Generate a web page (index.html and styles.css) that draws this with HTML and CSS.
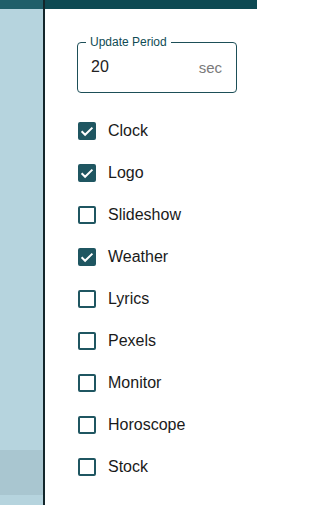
FILE: index.html
```html
<!DOCTYPE html>
<html>
<head>
<meta charset="utf-8">
<link rel="stylesheet" href="styles.css">
</head>
<body>
<div class="app">
  <aside class="sidebar">
    <div class="side-top"></div>
    <div class="side-fill"></div>
    <div class="side-sel"></div>
    <div class="side-end"></div>
  </aside>
  <main class="main">
    <div class="topbar"></div>
    <div class="content">
      <fieldset class="field">
        <legend class="field-label">Update Period</legend>
        <div class="field-row">
          <span class="field-value">20</span>
          <span class="field-unit">sec</span>
        </div>
      </fieldset>
      <ul class="checks">
        <li class="check"><span class="box on"><svg viewBox="0 0 18 18"><path d="M3.6 9.3l3.5 3.5L14.4 5.6" /></svg></span><span class="lbl">Clock</span></li>
        <li class="check"><span class="box on"><svg viewBox="0 0 18 18"><path d="M3.6 9.3l3.5 3.5L14.4 5.6" /></svg></span><span class="lbl">Logo</span></li>
        <li class="check"><span class="box"></span><span class="lbl">Slideshow</span></li>
        <li class="check"><span class="box on"><svg viewBox="0 0 18 18"><path d="M3.6 9.3l3.5 3.5L14.4 5.6" /></svg></span><span class="lbl">Weather</span></li>
        <li class="check"><span class="box"></span><span class="lbl">Lyrics</span></li>
        <li class="check"><span class="box"></span><span class="lbl">Pexels</span></li>
        <li class="check"><span class="box"></span><span class="lbl">Monitor</span></li>
        <li class="check"><span class="box"></span><span class="lbl">Horoscope</span></li>
        <li class="check"><span class="box"></span><span class="lbl">Stock</span></li>
      </ul>
    </div>
  </main>
</div>
</body>
</html>
```
FILE: styles.css
```css
* { box-sizing: border-box; }
html, body { margin: 0; padding: 0; background: #fff; }
body {
  font-family: "Liberation Sans", Arial, sans-serif;
  width: 257px;
  height: 505px;
  overflow: hidden;
}
.app { display: flex; height: 505px; }
.sidebar {
  width: 45px;
  flex: none;
  display: flex;
  flex-direction: column;
  border-right: 2px solid #13262b;
}
.side-top { height: 9px; background: #1f5e69; }
.side-fill { height: 441px; background: #b6d4de; }
.side-sel { height: 45px; background: #a9c6d0; }
.side-end { flex: 1; background: #b6d4de; }
.main { flex: 1; display: flex; flex-direction: column; }
.topbar { height: 9px; background: #0e4a53; }
.content { padding: 27px 0 0 32px; }
.field {
  margin: 0;
  width: 160px;
  height: 57px;
  border: 1px solid #1d4f58;
  border-radius: 4px;
  padding: 0 14px 0 13px;
}
.field-label {
  font-size: 12px;
  color: #0f4c55;
  padding: 0 4px;
  margin-left: -5px;
  line-height: 12px;
}
.field-row {
  display: flex;
  justify-content: space-between;
  align-items: center;
  margin-top: 10px;
}
.field-value { font-size: 16px; color: #222; }
.field-unit { font-size: 15px; color: #7a7a7a; }
.checks {
  list-style: none;
  margin: 29px 0 0 1px;
  padding: 0;
  display: flex;
  flex-direction: column;
  gap: 24px;
}
.check {
  display: flex;
  align-items: center;
  height: 18px;
  gap: 12px;
}
.box {
  position: relative;
  flex: none;
  width: 18px;
  height: 18px;
  border: 2px solid #1f5661;
  border-radius: 2px;
}
.box.on { background: #1f5661; }
.box svg { position: absolute; left: -2px; top: -2px; width: 18px; height: 18px; }
.box svg path { fill: none; stroke: #fff; stroke-width: 2; }
.lbl { font-size: 16px; color: #1a1a1a; }
```
